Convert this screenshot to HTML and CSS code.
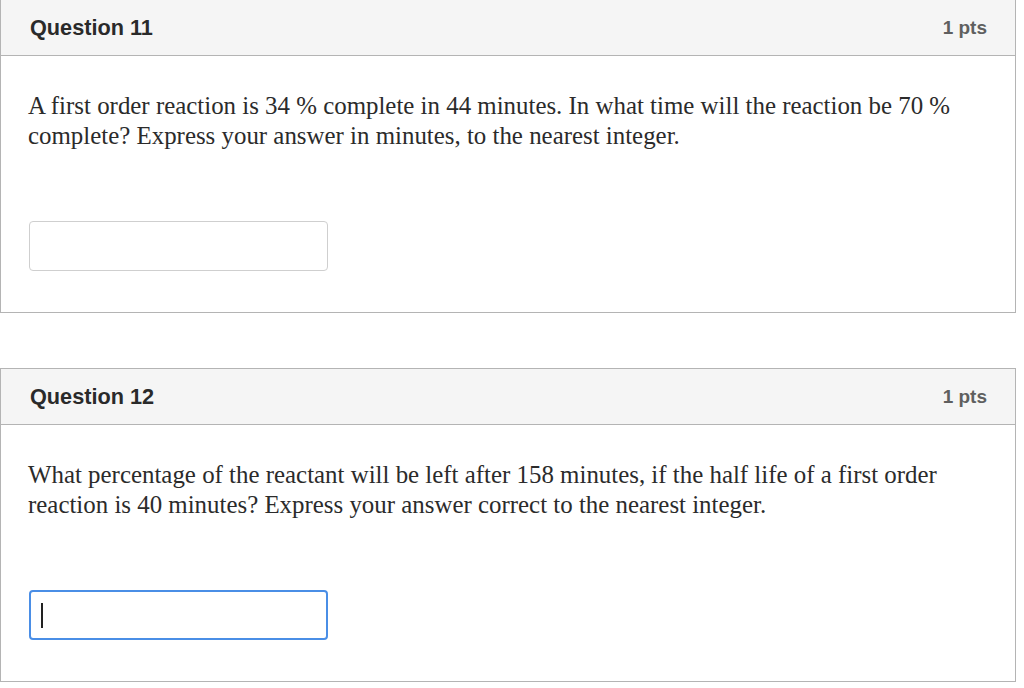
FILE: index.html
```html
<!DOCTYPE html>
<html lang="en">
<head>
<meta charset="utf-8">
<title>Quiz</title>
<link rel="stylesheet" href="styles.css">
</head>
<body>
<div class="quiz">
  <div class="question">
    <div class="q-header">
      <span class="q-title">Question 11</span>
      <span class="q-pts">1 pts</span>
    </div>
    <div class="q-body">
      <p class="q-text">A first order reaction is 34 % complete in 44 minutes. In what time will the reaction be 70 % complete? Express your answer in minutes, to the nearest integer.</p>
      <div class="answer"></div>
    </div>
  </div>
  <div class="question">
    <div class="q-header">
      <span class="q-title">Question 12</span>
      <span class="q-pts">1 pts</span>
    </div>
    <div class="q-body">
      <p class="q-text">What percentage of the reactant will be left after 158 minutes, if the half life of a first order reaction is 40 minutes? Express your answer correct to the nearest integer.</p>
      <div class="answer answer-focused"><span class="caret"></span></div>
    </div>
  </div>
</div>
</body>
</html>
```
FILE: styles.css
```css
html, body {
  margin: 0;
  padding: 0;
  background: #ffffff;
}
.quiz {
  display: flex;
  flex-direction: column;
  gap: 55px;
  width: 1016px;
  margin-top: -1px;
}
.question {
  border: 1px solid #b4b4b4;
  background: #ffffff;
}
.q-header {
  display: flex;
  justify-content: space-between;
  align-items: center;
  height: 55px;
  padding: 1px 28px 0 29px;
  box-sizing: border-box;
  height: 56px;
  background: #f5f5f5;
  border-bottom: 1px solid #b4b4b4;
  font-family: "Liberation Sans", Arial, sans-serif;
  font-weight: bold;
}
.q-title {
  font-size: 21.7px;
  color: #2a2a2a;
}
.q-pts {
  font-size: 19px;
  color: #5f5f5f;
}
.q-body {
  padding: 35px 28px 41px 27px;
}
.q-text {
  margin: 0;
  font-family: "Liberation Serif", "Times New Roman", serif;
  font-size: 24.9px;
  line-height: 30px;
  color: #2b2b2b;
  height: 130px;
}
.answer {
  box-sizing: border-box;
  width: 299px;
  height: 50px;
  margin-left: 1px;
  border: 1px solid #cfcfcf;
  border-radius: 4px;
  display: flex;
  align-items: center;
  padding-left: 11px;
}
.answer-focused {
  border: 2px solid #4a8ee6;
  padding-left: 10px;
}
.caret {
  display: block;
  width: 2px;
  height: 25px;
  background: #222222;
}
```
